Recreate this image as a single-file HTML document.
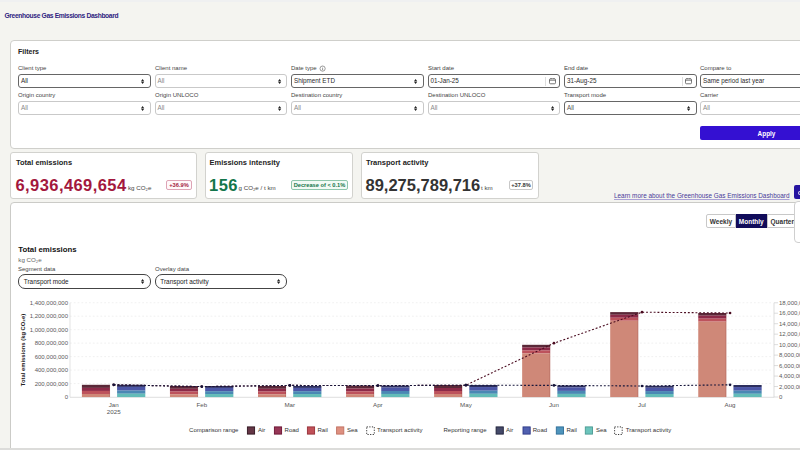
<!DOCTYPE html>
<html><head><meta charset="utf-8">
<style>
*{box-sizing:border-box;margin:0;padding:0}
html,body{width:800px;height:450px;overflow:hidden;background:#f4f4f0;font-family:"Liberation Sans",sans-serif;color:#222}
.abs{position:absolute}
#topstrip{left:0;top:0;width:800px;height:2px;background:#eff0f1}
#title{left:4.5px;top:12.4px;font-size:6.7px;font-weight:bold;color:#2e2380;white-space:nowrap;letter-spacing:-0.35px}
#filters{left:10.2px;top:39.6px;width:800px;height:109px;background:#fff;border:1px solid #cfcfcb;border-radius:4px}
.lbl{font-size:6px;color:#444;white-space:nowrap;margin-top:1px}
.inp{height:14px;border:1px solid #c9c9c9;border-radius:3px;background:#fff;font-size:6.3px;color:#888;padding-left:2px;line-height:12px;white-space:nowrap}
.inp.d{border-color:#666;color:#2a2a2a}
.arr{position:absolute;right:5px;top:4px;width:3.2px;height:5px;overflow:visible}
#apply{left:700px;top:126px;width:133px;height:14px;background:#3410d2;border-radius:2px;color:#fff;font-size:6.4px;font-weight:bold;text-align:center;line-height:15.8px}
.card{top:152.2px;height:46.8px;background:#fff;border:1px solid #d2d2ce;border-radius:3px}
.ctitle{font-size:7.5px;font-weight:bold;color:#222;white-space:nowrap}
.big{font-size:16.5px;font-weight:bold;white-space:nowrap}
.unit{font-size:6.2px;color:#444;white-space:nowrap}
.badge{height:10px;border:1px solid;border-radius:2px;font-size:5.7px;font-weight:bold;line-height:8.5px;text-align:center;white-space:nowrap}
#link{left:614px;top:191.5px;font-size:6.4px;color:#473a9a;text-decoration:underline;text-decoration-color:#aaa2d6;text-decoration-thickness:0.6px;text-underline-offset:1px;white-space:nowrap}
#darkbtn{left:794.2px;top:185px;width:10px;height:13.6px;background:#2614a0;border-radius:2px}
#chartp{left:10.2px;top:202.4px;width:800px;height:260px;background:#fff;border:1px solid #cbcbc7;border-radius:4px}
#botline{left:0;top:448.4px;width:800px;height:1.6px;background:#dcdcda}
.tog{top:214.2px;height:14px;font-size:6.5px;font-weight:bold;line-height:13.6px;text-align:center;border:1px solid #c8c8c8;white-space:nowrap}
#dd{left:794px;top:201px;width:20px;height:42px;background:#fff;border:1px solid #cfcfcf;border-radius:4px}
.pill{height:14.5px;border:1px solid #444;border-radius:7px;background:#fff;font-size:6.4px;color:#222;padding-left:4.8px;line-height:14px;white-space:nowrap}
svg text{font-family:"Liberation Sans",sans-serif}
</style></head><body>
<div class="abs" id="topstrip"></div>
<div class="abs" id="title">Greenhouse Gas Emissions Dashboard</div>

<div class="abs" id="filters"></div>
<div class="abs" style="left:18px;top:48px;font-size:7px;font-weight:bold;color:#222">Filters</div>

<!-- row 1 labels -->
<div class="abs lbl" style="left:18px;top:64px">Client type</div>
<div class="abs lbl" style="left:155px;top:64px">Client name</div>
<div class="abs lbl" style="left:291px;top:64px">Date type</div>
<svg class="abs" style="left:319px;top:64.6px" width="7.2" height="7.2" viewBox="0 0 7.2 7.2"><circle cx="3.6" cy="3.6" r="2.6" fill="none" stroke="#666" stroke-width="0.65"/><line x1="3.6" y1="3.1" x2="3.6" y2="5.2" stroke="#666" stroke-width="0.7"/><circle cx="3.6" cy="2.1" r="0.4" fill="#666"/></svg>
<div class="abs lbl" style="left:428px;top:64px">Start date</div>
<div class="abs lbl" style="left:564px;top:64px">End date</div>
<div class="abs lbl" style="left:700px;top:64px">Compare to</div>

<div class="abs inp d" style="left:18px;top:73.5px;width:132.5px">All<svg class="arr" viewBox="0 0 3.2 5"><path d="M0 2.25 L1.6 0 L3.2 2.25Z M0 2.75 L1.6 5 L3.2 2.75Z" fill="#222"/></svg></div>
<div class="abs inp" style="left:154.5px;top:73.5px;width:132.5px">All<svg class="arr" viewBox="0 0 3.2 5"><path d="M0 2.25 L1.6 0 L3.2 2.25Z M0 2.75 L1.6 5 L3.2 2.75Z" fill="#222"/></svg></div>
<div class="abs inp d" style="left:291px;top:73.5px;width:132.5px">Shipment ETD<svg class="arr" viewBox="0 0 3.2 5"><path d="M0 2.25 L1.6 0 L3.2 2.25Z M0 2.75 L1.6 5 L3.2 2.75Z" fill="#222"/></svg></div>
<div class="abs inp d" style="left:427.5px;top:73.5px;width:132.5px">01-Jan-25<span style="position:absolute;right:13px;top:2.5px;width:0.8px;height:8.5px;background:#ddd"></span><svg style="position:absolute;right:3.5px;top:3.3px;overflow:visible" width="7" height="6.2" viewBox="0 0 7 6.2"><rect x="0.5" y="0.8" width="6" height="5" rx="1" fill="none" stroke="#555" stroke-width="0.8"/><line x1="0.5" y1="2.3" x2="6.5" y2="2.3" stroke="#555" stroke-width="0.7"/><line x1="2" y1="0" x2="2" y2="1.2" stroke="#555" stroke-width="0.8"/><line x1="5" y1="0" x2="5" y2="1.2" stroke="#555" stroke-width="0.8"/></svg></div>
<div class="abs inp d" style="left:564px;top:73.5px;width:132.5px">31-Aug-25<span style="position:absolute;right:13px;top:2.5px;width:0.8px;height:8.5px;background:#ddd"></span><svg style="position:absolute;right:3.5px;top:3.3px;overflow:visible" width="7" height="6.2" viewBox="0 0 7 6.2"><rect x="0.5" y="0.8" width="6" height="5" rx="1" fill="none" stroke="#555" stroke-width="0.8"/><line x1="0.5" y1="2.3" x2="6.5" y2="2.3" stroke="#555" stroke-width="0.7"/><line x1="2" y1="0" x2="2" y2="1.2" stroke="#555" stroke-width="0.8"/><line x1="5" y1="0" x2="5" y2="1.2" stroke="#555" stroke-width="0.8"/></svg></div>
<div class="abs inp d" style="left:700px;top:73.5px;width:133px">Same period last year</div>

<!-- row 2 -->
<div class="abs lbl" style="left:18px;top:91px">Origin country</div>
<div class="abs lbl" style="left:155px;top:91px">Origin UNLOCO</div>
<div class="abs lbl" style="left:291px;top:91px">Destination country</div>
<div class="abs lbl" style="left:428px;top:91px">Destination UNLOCO</div>
<div class="abs lbl" style="left:564px;top:91px">Transport mode</div>
<div class="abs lbl" style="left:700px;top:91px">Carrier</div>

<div class="abs inp" style="left:18px;top:100.5px;width:132.5px">All<svg class="arr" viewBox="0 0 3.2 5"><path d="M0 2.25 L1.6 0 L3.2 2.25Z M0 2.75 L1.6 5 L3.2 2.75Z" fill="#222"/></svg></div>
<div class="abs inp" style="left:154.5px;top:100.5px;width:132.5px">All<svg class="arr" viewBox="0 0 3.2 5"><path d="M0 2.25 L1.6 0 L3.2 2.25Z M0 2.75 L1.6 5 L3.2 2.75Z" fill="#222"/></svg></div>
<div class="abs inp" style="left:291px;top:100.5px;width:132.5px">All<svg class="arr" viewBox="0 0 3.2 5"><path d="M0 2.25 L1.6 0 L3.2 2.25Z M0 2.75 L1.6 5 L3.2 2.75Z" fill="#222"/></svg></div>
<div class="abs inp" style="left:427.5px;top:100.5px;width:132.5px">All<svg class="arr" viewBox="0 0 3.2 5"><path d="M0 2.25 L1.6 0 L3.2 2.25Z M0 2.75 L1.6 5 L3.2 2.75Z" fill="#222"/></svg></div>
<div class="abs inp d" style="left:564px;top:100.5px;width:132.5px;color:#555">All<svg class="arr" viewBox="0 0 3.2 5"><path d="M0 2.25 L1.6 0 L3.2 2.25Z M0 2.75 L1.6 5 L3.2 2.75Z" fill="#222"/></svg></div>
<div class="abs inp" style="left:700px;top:100.5px;width:133px">All</div>

<div class="abs" id="apply">Apply</div>

<!-- KPI cards -->
<div class="abs card" style="left:10.2px;width:186.8px"></div>
<div class="abs ctitle" style="left:16px;top:158px">Total emissions</div>
<div class="abs big" style="left:15.5px;top:176px;color:#a3173d;letter-spacing:0.42px">6,936,469,654</div>
<div class="abs unit" style="left:128px;top:184.2px">kg CO₂e</div>
<div class="abs badge" style="left:166px;top:180px;width:26px;border-color:#dea4b6;background:#fff8fa;color:#a3173d">+36.9%</div>

<div class="abs card" style="left:204.5px;width:148.5px"></div>
<div class="abs ctitle" style="left:209.5px;top:158px">Emissions intensity</div>
<div class="abs big" style="left:209px;top:176px;color:#13764b;letter-spacing:0.45px">156</div>
<div class="abs unit" style="left:238.5px;top:184.2px">g CO₂e / t km</div>
<div class="abs badge" style="left:291px;top:180px;width:57px;border-color:#8ec6ac;background:#f2faf5;color:#13764b">Decrease of &lt; 0.1%</div>

<div class="abs card" style="left:360.5px;width:178.5px"></div>
<div class="abs ctitle" style="left:366px;top:158px">Transport activity</div>
<div class="abs big" style="left:365.5px;top:176px;color:#333">89,275,789,716</div>
<div class="abs unit" style="left:481px;top:184.2px">t km</div>
<div class="abs badge" style="left:509px;top:180px;width:24px;border-color:#c8c8c8;color:#333">+37.8%</div>

<div class="abs" id="link">Learn more about the Greenhouse Gas Emissions Dashboard</div>
<div class="abs" id="darkbtn"><span style="position:absolute;left:3.4px;top:5.6px;width:4.8px;height:4.6px;border:1.1px solid #d8d4f0;border-radius:50%"></span></div>

<!-- chart panel -->
<div class="abs" id="chartp"></div>
<div class="abs tog" style="left:706px;width:30px;background:#fff;color:#333;border-radius:2px 0 0 2px">Weekly</div>
<div class="abs tog" style="left:735.5px;width:31.5px;background:#110c5a;border-color:#110c5a;color:#fff">Monthly</div>
<div class="abs tog" style="left:766.5px;width:40px;background:#fff;color:#333;text-align:left;padding-left:3px">Quarterly</div>
<div class="abs" id="dd"></div>
<div class="abs" id="botline"></div>

<div class="abs" style="left:18.3px;top:244.6px;font-size:7.8px;font-weight:bold;color:#111">Total emissions</div>
<div class="abs" style="left:18.3px;top:256.3px;font-size:6.2px;color:#666">kg CO₂e</div>
<div class="abs lbl" style="left:18px;top:265px">Segment data</div>
<div class="abs lbl" style="left:155px;top:265px">Overlay data</div>
<div class="abs pill" style="left:18px;top:274px;width:132.5px">Transport mode<svg class="arr" style="right:5.5px;top:4.3px" viewBox="0 0 3.2 5"><path d="M0 2.25 L1.6 0 L3.2 2.25Z M0 2.75 L1.6 5 L3.2 2.75Z" fill="#222"/></svg></div>
<div class="abs pill" style="left:154.5px;top:274px;width:132.5px">Transport activity<svg class="arr" style="right:5.5px;top:4.3px" viewBox="0 0 3.2 5"><path d="M0 2.25 L1.6 0 L3.2 2.25Z M0 2.75 L1.6 5 L3.2 2.75Z" fill="#222"/></svg></div>

<svg class="abs" style="left:0;top:0" width="800" height="450" viewBox="0 0 800 450">
<line x1="70" y1="383.54" x2="772" y2="383.54" stroke="#e8e8e8" stroke-width="0.6" stroke-dasharray="1.8 2"/>
<line x1="70" y1="370.07" x2="772" y2="370.07" stroke="#e8e8e8" stroke-width="0.6" stroke-dasharray="1.8 2"/>
<line x1="70" y1="356.61" x2="772" y2="356.61" stroke="#e8e8e8" stroke-width="0.6" stroke-dasharray="1.8 2"/>
<line x1="70" y1="343.14" x2="772" y2="343.14" stroke="#e8e8e8" stroke-width="0.6" stroke-dasharray="1.8 2"/>
<line x1="70" y1="329.68" x2="772" y2="329.68" stroke="#e8e8e8" stroke-width="0.6" stroke-dasharray="1.8 2"/>
<line x1="70" y1="316.21" x2="772" y2="316.21" stroke="#e8e8e8" stroke-width="0.6" stroke-dasharray="1.8 2"/>
<line x1="70" y1="302.75" x2="772" y2="302.75" stroke="#e8e8e8" stroke-width="0.6" stroke-dasharray="1.8 2"/>
<text x="68" y="399.20" font-size="6" fill="#5a5a5a" text-anchor="end">0</text>
<text x="68" y="385.74" font-size="6" fill="#5a5a5a" text-anchor="end">200,000,000</text>
<text x="68" y="372.27" font-size="6" fill="#5a5a5a" text-anchor="end">400,000,000</text>
<text x="68" y="358.81" font-size="6" fill="#5a5a5a" text-anchor="end">600,000,000</text>
<text x="68" y="345.34" font-size="6" fill="#5a5a5a" text-anchor="end">800,000,000</text>
<text x="68" y="331.88" font-size="6" fill="#5a5a5a" text-anchor="end">1,000,000,000</text>
<text x="68" y="318.41" font-size="6" fill="#5a5a5a" text-anchor="end">1,200,000,000</text>
<text x="68" y="304.95" font-size="6" fill="#5a5a5a" text-anchor="end">1,400,000,000</text>
<line x1="70" y1="302.75" x2="70" y2="397.3" stroke="#d6d6d6" stroke-width="0.7"/>
<line x1="70" y1="397.3" x2="774" y2="397.3" stroke="#d6d6d6" stroke-width="0.8"/>
<line x1="774" y1="302.75" x2="774" y2="397.3" stroke="#cfcfcf" stroke-width="0.7"/>
<line x1="774" y1="397.00" x2="778" y2="397.00" stroke="#cfcfcf" stroke-width="0.7"/>
<text x="779" y="399.20" font-size="6" fill="#5a5a5a">0</text>
<line x1="774" y1="386.53" x2="778" y2="386.53" stroke="#cfcfcf" stroke-width="0.7"/>
<text x="779" y="388.73" font-size="6" fill="#5a5a5a">2,000,000</text>
<line x1="774" y1="376.06" x2="778" y2="376.06" stroke="#cfcfcf" stroke-width="0.7"/>
<text x="779" y="378.26" font-size="6" fill="#5a5a5a">4,000,000</text>
<line x1="774" y1="365.58" x2="778" y2="365.58" stroke="#cfcfcf" stroke-width="0.7"/>
<text x="779" y="367.78" font-size="6" fill="#5a5a5a">6,000,000</text>
<line x1="774" y1="355.11" x2="778" y2="355.11" stroke="#cfcfcf" stroke-width="0.7"/>
<text x="779" y="357.31" font-size="6" fill="#5a5a5a">8,000,000</text>
<line x1="774" y1="344.64" x2="778" y2="344.64" stroke="#cfcfcf" stroke-width="0.7"/>
<text x="779" y="346.84" font-size="6" fill="#5a5a5a">10,000,000</text>
<line x1="774" y1="334.17" x2="778" y2="334.17" stroke="#cfcfcf" stroke-width="0.7"/>
<text x="779" y="336.37" font-size="6" fill="#5a5a5a">12,000,000</text>
<line x1="774" y1="323.69" x2="778" y2="323.69" stroke="#cfcfcf" stroke-width="0.7"/>
<text x="779" y="325.89" font-size="6" fill="#5a5a5a">14,000,000</text>
<line x1="774" y1="313.22" x2="778" y2="313.22" stroke="#cfcfcf" stroke-width="0.7"/>
<text x="779" y="315.42" font-size="6" fill="#5a5a5a">16,000,000</text>
<line x1="774" y1="302.75" x2="778" y2="302.75" stroke="#cfcfcf" stroke-width="0.7"/>
<text x="779" y="304.95" font-size="6" fill="#5a5a5a">18,000,000</text>
<text transform="translate(25.2,350) rotate(-90)" font-size="5.85" font-weight="bold" fill="#222" text-anchor="middle">Total emissions (kg CO₂e)</text>
<text x="113.70" y="406.8" font-size="6.2" fill="#555" text-anchor="middle">Jan</text>
<text x="201.75" y="406.8" font-size="6.2" fill="#555" text-anchor="middle">Feb</text>
<text x="289.80" y="406.8" font-size="6.2" fill="#555" text-anchor="middle">Mar</text>
<text x="377.85" y="406.8" font-size="6.2" fill="#555" text-anchor="middle">Apr</text>
<text x="465.90" y="406.8" font-size="6.2" fill="#555" text-anchor="middle">May</text>
<text x="553.95" y="406.8" font-size="6.2" fill="#555" text-anchor="middle">Jun</text>
<text x="642.00" y="406.8" font-size="6.2" fill="#555" text-anchor="middle">Jul</text>
<text x="730.05" y="406.8" font-size="6.2" fill="#555" text-anchor="middle">Aug</text>
<text x="113.70" y="413.8" font-size="6.2" fill="#555" text-anchor="middle">2025</text>
<rect x="81.90" y="384.80" width="28" height="3.10" fill="#5a2838"/>
<rect x="81.90" y="387.85" width="28" height="3.10" fill="#8c2a48"/>
<rect x="81.90" y="390.90" width="28" height="3.10" fill="#bd525c"/>
<rect x="81.90" y="393.95" width="28" height="3.10" fill="#cf8878"/>
<rect x="109.20" y="384.80" width="0.9" height="12.20" fill="#7a2a2a" fill-opacity="0.25"/>
<rect x="117.10" y="384.80" width="28.2" height="2.12" fill="#2c2e5e"/>
<rect x="117.10" y="386.87" width="28.2" height="3.71" fill="#4c56a6"/>
<rect x="117.10" y="390.53" width="28.2" height="3.22" fill="#4a88b4"/>
<rect x="117.10" y="393.71" width="28.2" height="3.34" fill="#63bcb8"/>
<rect x="169.95" y="386.00" width="28" height="2.80" fill="#5a2838"/>
<rect x="169.95" y="388.75" width="28" height="2.80" fill="#8c2a48"/>
<rect x="169.95" y="391.50" width="28" height="2.80" fill="#bd525c"/>
<rect x="169.95" y="394.25" width="28" height="2.80" fill="#cf8878"/>
<rect x="197.25" y="386.00" width="0.9" height="11.00" fill="#7a2a2a" fill-opacity="0.25"/>
<rect x="205.15" y="386.00" width="28.2" height="1.92" fill="#2c2e5e"/>
<rect x="205.15" y="387.87" width="28.2" height="3.35" fill="#4c56a6"/>
<rect x="205.15" y="391.17" width="28.2" height="2.91" fill="#4a88b4"/>
<rect x="205.15" y="394.03" width="28.2" height="3.02" fill="#63bcb8"/>
<rect x="258.00" y="386.00" width="28" height="2.80" fill="#5a2838"/>
<rect x="258.00" y="388.75" width="28" height="2.80" fill="#8c2a48"/>
<rect x="258.00" y="391.50" width="28" height="2.80" fill="#bd525c"/>
<rect x="258.00" y="394.25" width="28" height="2.80" fill="#cf8878"/>
<rect x="285.30" y="386.00" width="0.9" height="11.00" fill="#7a2a2a" fill-opacity="0.25"/>
<rect x="293.20" y="386.00" width="28.2" height="1.92" fill="#2c2e5e"/>
<rect x="293.20" y="387.87" width="28.2" height="3.35" fill="#4c56a6"/>
<rect x="293.20" y="391.17" width="28.2" height="2.91" fill="#4a88b4"/>
<rect x="293.20" y="394.03" width="28.2" height="3.02" fill="#63bcb8"/>
<rect x="346.05" y="385.60" width="28" height="2.90" fill="#5a2838"/>
<rect x="346.05" y="388.45" width="28" height="2.90" fill="#8c2a48"/>
<rect x="346.05" y="391.30" width="28" height="2.90" fill="#bd525c"/>
<rect x="346.05" y="394.15" width="28" height="2.90" fill="#cf8878"/>
<rect x="373.35" y="385.60" width="0.9" height="11.40" fill="#7a2a2a" fill-opacity="0.25"/>
<rect x="381.25" y="385.60" width="28.2" height="1.99" fill="#2c2e5e"/>
<rect x="381.25" y="387.54" width="28.2" height="3.47" fill="#4c56a6"/>
<rect x="381.25" y="390.96" width="28.2" height="3.01" fill="#4a88b4"/>
<rect x="381.25" y="393.92" width="28.2" height="3.13" fill="#63bcb8"/>
<rect x="434.10" y="385.00" width="28" height="3.05" fill="#5a2838"/>
<rect x="434.10" y="388.00" width="28" height="3.05" fill="#8c2a48"/>
<rect x="434.10" y="391.00" width="28" height="3.05" fill="#bd525c"/>
<rect x="434.10" y="394.00" width="28" height="3.05" fill="#cf8878"/>
<rect x="461.40" y="385.00" width="0.9" height="12.00" fill="#7a2a2a" fill-opacity="0.25"/>
<rect x="469.30" y="385.00" width="28.2" height="2.09" fill="#2c2e5e"/>
<rect x="469.30" y="387.04" width="28.2" height="3.65" fill="#4c56a6"/>
<rect x="469.30" y="390.64" width="28.2" height="3.17" fill="#4a88b4"/>
<rect x="469.30" y="393.76" width="28.2" height="3.29" fill="#63bcb8"/>
<rect x="522.15" y="344.80" width="28" height="2.65" fill="#5a2838"/>
<rect x="522.15" y="347.40" width="28" height="3.05" fill="#8c2a48"/>
<rect x="522.15" y="350.40" width="28" height="3.05" fill="#bd525c"/>
<rect x="522.15" y="353.40" width="28" height="43.65" fill="#cf8878"/>
<rect x="549.45" y="344.80" width="0.9" height="52.20" fill="#7a2a2a" fill-opacity="0.25"/>
<rect x="557.35" y="385.40" width="28.2" height="2.02" fill="#2c2e5e"/>
<rect x="557.35" y="387.37" width="28.2" height="3.53" fill="#4c56a6"/>
<rect x="557.35" y="390.85" width="28.2" height="3.07" fill="#4a88b4"/>
<rect x="557.35" y="393.87" width="28.2" height="3.18" fill="#63bcb8"/>
<rect x="610.20" y="312.10" width="28" height="2.65" fill="#5a2838"/>
<rect x="610.20" y="314.70" width="28" height="3.05" fill="#8c2a48"/>
<rect x="610.20" y="317.70" width="28" height="3.05" fill="#bd525c"/>
<rect x="610.20" y="320.70" width="28" height="76.35" fill="#cf8878"/>
<rect x="637.50" y="312.10" width="0.9" height="84.90" fill="#7a2a2a" fill-opacity="0.25"/>
<rect x="645.40" y="385.80" width="28.2" height="1.95" fill="#2c2e5e"/>
<rect x="645.40" y="387.70" width="28.2" height="3.41" fill="#4c56a6"/>
<rect x="645.40" y="391.06" width="28.2" height="2.96" fill="#4a88b4"/>
<rect x="645.40" y="393.98" width="28.2" height="3.07" fill="#63bcb8"/>
<rect x="698.25" y="313.00" width="28" height="2.65" fill="#5a2838"/>
<rect x="698.25" y="315.60" width="28" height="3.05" fill="#8c2a48"/>
<rect x="698.25" y="318.60" width="28" height="3.05" fill="#bd525c"/>
<rect x="698.25" y="321.60" width="28" height="75.45" fill="#cf8878"/>
<rect x="725.55" y="313.00" width="0.9" height="84.00" fill="#7a2a2a" fill-opacity="0.25"/>
<rect x="733.45" y="385.00" width="28.2" height="2.09" fill="#2c2e5e"/>
<rect x="733.45" y="387.04" width="28.2" height="3.65" fill="#4c56a6"/>
<rect x="733.45" y="390.64" width="28.2" height="3.17" fill="#4a88b4"/>
<rect x="733.45" y="393.76" width="28.2" height="3.29" fill="#63bcb8"/>
<polyline points="113.70,384.8 201.75,386.6 289.80,385.4 377.85,385.6 465.90,385.2 553.95,343.2 642.00,312.2 730.05,313.0" fill="none" stroke="#4a0c20" stroke-width="1.1" stroke-dasharray="1.9 1.9"/>
<circle cx="113.70" cy="384.8" r="1.35" fill="#4a0c20"/>
<circle cx="201.75" cy="386.6" r="1.35" fill="#4a0c20"/>
<circle cx="289.80" cy="385.4" r="1.35" fill="#4a0c20"/>
<circle cx="377.85" cy="385.6" r="1.35" fill="#4a0c20"/>
<circle cx="465.90" cy="385.2" r="1.35" fill="#4a0c20"/>
<circle cx="553.95" cy="343.2" r="1.35" fill="#4a0c20"/>
<circle cx="642.00" cy="312.2" r="1.35" fill="#4a0c20"/>
<circle cx="730.05" cy="313.0" r="1.35" fill="#4a0c20"/>
<polyline points="113.70,384.8 201.75,386.6 289.80,385.4 377.85,385.6 465.90,385.2 553.95,385.4 642.00,386.0 730.05,384.8" fill="none" stroke="#15143a" stroke-width="1.1" stroke-dasharray="1.9 1.9"/>
<circle cx="113.70" cy="384.8" r="1.35" fill="#15143a"/>
<circle cx="201.75" cy="386.6" r="1.35" fill="#15143a"/>
<circle cx="289.80" cy="385.4" r="1.35" fill="#15143a"/>
<circle cx="377.85" cy="385.6" r="1.35" fill="#15143a"/>
<circle cx="465.90" cy="385.2" r="1.35" fill="#15143a"/>
<circle cx="553.95" cy="385.4" r="1.35" fill="#15143a"/>
<circle cx="642.00" cy="386.0" r="1.35" fill="#15143a"/>
<circle cx="730.05" cy="384.8" r="1.35" fill="#15143a"/>
<text x="189.10" y="432.3" font-size="6" fill="#333">Comparison range</text>
<rect x="247.40" y="426.9" width="7.2" height="7.2" fill="#643646" stroke="#2e1420" stroke-width="0.9"/>
<text x="257.90" y="432.3" font-size="6" fill="#333">Air</text>
<rect x="274.40" y="426.9" width="7.2" height="7.2" fill="#963656" stroke="#6a1232" stroke-width="0.9"/>
<text x="284.60" y="432.3" font-size="6" fill="#333">Road</text>
<rect x="307.40" y="426.9" width="7.2" height="7.2" fill="#c05058" stroke="#943038" stroke-width="0.9"/>
<text x="317.50" y="432.3" font-size="6" fill="#333">Rail</text>
<rect x="336.60" y="426.9" width="7.2" height="7.2" fill="#de9080" stroke="#c07060" stroke-width="0.9"/>
<text x="346.90" y="432.3" font-size="6" fill="#333">Sea</text>
<rect x="366.70" y="426.9" width="7.6" height="7.6" fill="none" stroke="#222" stroke-width="0.9" stroke-dasharray="1.2 1.4"/>
<text x="377.00" y="432.3" font-size="6" fill="#333">Transport activity</text>
<text x="443.50" y="432.3" font-size="6" fill="#333">Reporting range</text>
<rect x="496.10" y="426.9" width="7.2" height="7.2" fill="#454a6a" stroke="#1e2038" stroke-width="0.9"/>
<text x="506.00" y="432.3" font-size="6" fill="#333">Air</text>
<rect x="523.00" y="426.9" width="7.2" height="7.2" fill="#5060b0" stroke="#2e3a88" stroke-width="0.9"/>
<text x="532.75" y="432.3" font-size="6" fill="#333">Road</text>
<rect x="556.30" y="426.9" width="7.2" height="7.2" fill="#4e94bc" stroke="#2e6e98" stroke-width="0.9"/>
<text x="566.50" y="432.3" font-size="6" fill="#333">Rail</text>
<rect x="585.30" y="426.9" width="7.2" height="7.2" fill="#6cc4bc" stroke="#4a9a92" stroke-width="0.9"/>
<text x="595.90" y="432.3" font-size="6" fill="#333">Sea</text>
<rect x="614.60" y="426.9" width="7.6" height="7.6" fill="none" stroke="#222" stroke-width="0.9" stroke-dasharray="1.2 1.4"/>
<text x="625.70" y="432.3" font-size="6" fill="#333">Transport activity</text>
</svg>
</body></html>
